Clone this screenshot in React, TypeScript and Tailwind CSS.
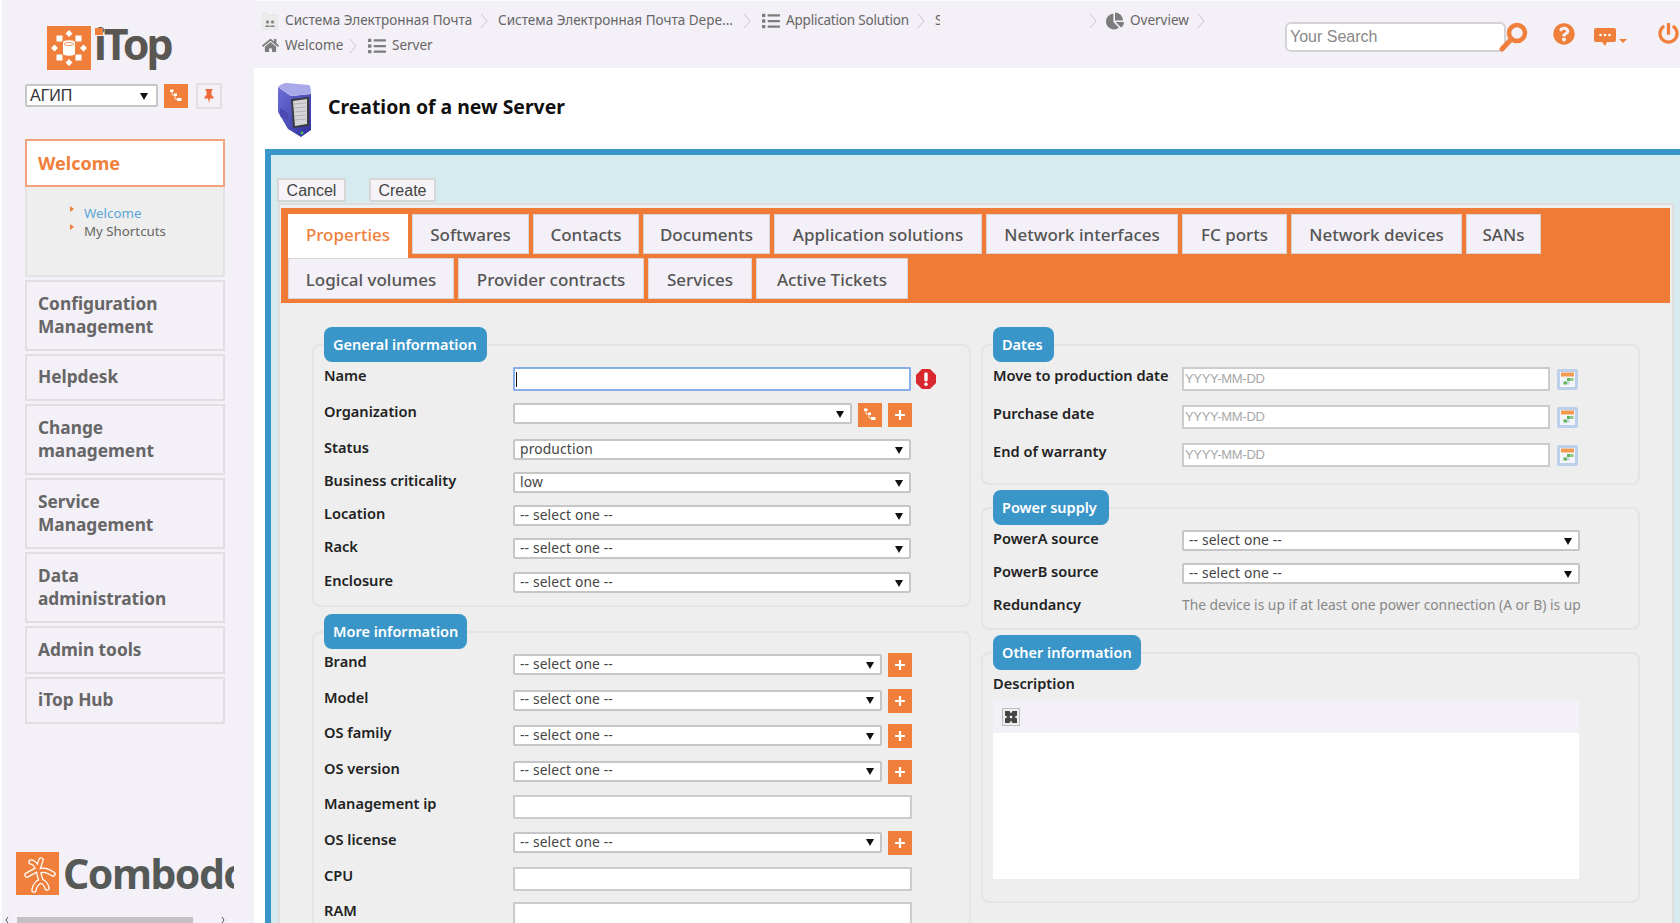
import { FaChartPie, FaHome, FaList, FaPowerOff, FaQuestionCircle } from "react-icons/fa";

const ui = "font-['Noto_Sans','Liberation_Sans',sans-serif]";

const tabsTop = [
  { label: "Properties", w: "w-[120px]", active: true },
  { label: "Softwares", w: "w-[117px]" },
  { label: "Contacts", w: "w-[106px]" },
  { label: "Documents", w: "w-[127px]" },
  { label: "Application solutions", w: "w-[208px]" },
  { label: "Network interfaces", w: "w-[192px]" },
  { label: "FC ports", w: "w-[105px]" },
  { label: "Network devices", w: "w-[171px]" },
  { label: "SANs", w: "w-[75px]" },
];
const tabsBottom = [
  { label: "Logical volumes", w: "w-[166px]" },
  { label: "Provider contracts", w: "w-[186px]" },
  { label: "Services", w: "w-[104px]" },
  { label: "Active Tickets", w: "w-[152px]" },
];

const menu = [
  { lines: ["Configuration", "Management"], h: "h-[71px]" },
  { lines: ["Helpdesk"], h: "h-[47px]" },
  { lines: ["Change", "management"], h: "h-[71px]" },
  { lines: ["Service", "Management"], h: "h-[71px]" },
  { lines: ["Data", "administration"], h: "h-[71px]" },
  { lines: ["Admin tools"], h: "h-[48px]" },
  { lines: ["iTop Hub"], h: "h-[47px]" },
];

function Caret() {
  return (
    <svg viewBox="0 0 8 8" className="w-[8px] h-[8px] shrink-0 fill-[#111]">
      <path d="M0 1h8L4 8z" />
    </svg>
  );
}

function Chevron({ className = "" }: { className?: string }) {
  return (
    <svg viewBox="0 0 8 16" className={`w-[8px] h-[16px] shrink-0 fill-none stroke-[#c9c6cc] ${className}`}>
      <path d="M1 1l6 7-6 7" strokeWidth="1" />
    </svg>
  );
}

function TreeButton({ className = "" }: { className?: string }) {
  return (
    <div className={`bg-[#ef7f3a] flex items-center justify-center shrink-0 ${className}`}>
      <svg viewBox="0 0 14 14" className="w-[14px] h-[14px]">
        <path d="M3 3v3h3M6 6v4h2" fill="none" stroke="#fbe2d2" strokeWidth="1" />
        <rect x="1" y="0.5" width="3.5" height="2.5" fill="#fff" />
        <rect x="5" y="4.5" width="3" height="2.5" fill="#fff" />
        <rect x="8" y="9" width="4.5" height="3" fill="#fff" />
      </svg>
    </div>
  );
}

function PlusButton() {
  return (
    <div className="w-[24px] h-[24px] bg-[#ef7f3a] flex items-center justify-center shrink-0">
      <svg viewBox="0 0 10 10" className="w-[10px] h-[10px] stroke-white">
        <path d="M5 0v10M0 5h10" strokeWidth="2.2" />
      </svg>
    </div>
  );
}

function Select({ value = "", w = "w-[398px]", h = "h-[21px]" }: { value?: string; w?: string; h?: string }) {
  return (
    <div className={`${w} ${h} shrink-0 bg-white border-2 border-[#c6c6c6] rounded-[2px] flex items-center justify-between pl-[5px] pr-[6px] text-[13.8px] leading-none text-[#444]`}>
      <span className="whitespace-nowrap -mt-[2px] tracking-[0.15px]">{value}</span>
      <Caret />
    </div>
  );
}

function TextBox({ w = "w-[399px]" }: { w?: string }) {
  return <input className={`${w} h-[24px] shrink-0 bg-white border-2 border-[#cccccc] rounded-[1px] outline-none`} />;
}

function DateBox() {
  return (
    <div className="w-[368px] h-[24px] shrink-0 bg-white border-2 border-[#cccccc] flex items-center pl-[1px] font-['Liberation_Sans',sans-serif] text-[13px] tracking-[-0.3px] text-[#a8a8a8]">
      YYYY-MM-DD
    </div>
  );
}

function CalendarIcon() {
  return (
    <svg viewBox="0 0 21 21" className="w-[21px] h-[21px] ml-[7px] mt-[2px] shrink-0">
      <rect x="0" y="0" width="21" height="21" rx="2" fill="#bcd0ec" />
      <rect x="3" y="3" width="15" height="15" fill="#f3f5f8" />
      <rect x="4" y="3.5" width="13" height="4" fill="#f29a4e" />
      <rect x="10" y="9" width="3.5" height="3" fill="#5fb35a" />
      <rect x="13.5" y="9" width="3" height="3" fill="#8ccb84" />
      <rect x="6.5" y="12.5" width="3.5" height="3" fill="#5fb35a" />
      <rect x="10" y="12.5" width="2.5" height="3" fill="#c9d6e6" />
    </svg>
  );
}

function ErrorIcon() {
  return (
    <svg viewBox="0 0 20 20" className="w-[20px] h-[20px] ml-[5px] mt-[2px] shrink-0">
      <path d="M6 0h8l6 6v8l-6 6H6l-6-6V6z" fill="#d9272e" />
      <rect x="8.3" y="3.5" width="3.4" height="9" rx="1.4" fill="#fff" />
      <circle cx="10" cy="15.3" r="1.8" fill="#fff" />
    </svg>
  );
}

function Label({ children }: { children: string }) {
  return <div className="w-[189px] shrink-0 -mt-px text-[14.6px] leading-[18px] font-semibold text-[#222] whitespace-nowrap">{children}</div>;
}

function Row({ label, h, children }: { label: string; h: string; children?: React.ReactNode }) {
  return (
    <div className={`flex items-start ${h}`}>
      <Label>{label}</Label>
      {children}
    </div>
  );
}

function Fieldset({ title, legendW, className = "", children }: { title: string; legendW: string; className?: string; children: React.ReactNode }) {
  return (
    <section className={`border-2 border-[#e4e4e4] rounded-[8px] pl-[10px] ${className}`}>
      <div className={`${legendW} h-[35px] -mt-[19px] bg-[#3a96c9] rounded-[8px] text-white text-[14.5px] font-semibold flex items-center pl-[9px] whitespace-nowrap`}>
        {title}
      </div>
      {children}
    </section>
  );
}

function SelectPlus({ h }: { h: string }) {
  return (
    <div className={`flex items-start gap-[6px] ${h}`}>
      <div className="pt-px">
        <Select value="-- select one --" w="w-[369px]" />
      </div>
      <PlusButton />
    </div>
  );
}

function ItopMark() {
  return (
    <svg viewBox="0 0 44 44" className="w-[44px] h-[44px] shrink-0">
      <rect width="44" height="44" fill="#ef7f3a" />
      <g fill="#fff">
        <path d="M22 4l3.5 3.5L22 11l-3.5-3.5zM22 33l3.5 3.5L22 40l-3.5-3.5zM7.5 18.5L11 22l-3.5 3.5L4 22zM36.5 18.5L40 22l-3.5 3.5L33 22z" />
        <rect x="9.5" y="9.5" width="6" height="6" />
        <rect x="28.5" y="9.5" width="6" height="6" />
        <rect x="9.5" y="28.5" width="6" height="6" />
        <rect x="28.5" y="28.5" width="6" height="6" />
        <path d="M16 16.5c0-3 12-3 12 0v11c0 3-12 3-12 0z" />
      </g>
      <ellipse cx="22" cy="18" rx="5" ry="1.5" fill="none" stroke="#ef7f3a" strokeWidth="0.8" />
    </svg>
  );
}

function ComboMark() {
  const limbs = "M15 10c3 0 5 3 7 7M22 17l-11 6M22 17l3-9M24 19c4-2 8 0 13 3M22 17c1 5 2 9 3 12M25 29c-3 1-6 4-7 9M25 29c3 1 5 3 6 7";
  return (
    <svg viewBox="0 0 43 43" className="w-[43px] h-[43px] shrink-0 fill-none" strokeLinecap="round">
      <rect width="43" height="43" fill="#ef7f3a" />
      <path d={limbs} stroke="#fff" strokeWidth="5.5" />
      <path d={limbs} stroke="#ef7f3a" strokeWidth="3" />
    </svg>
  );
}

function ServerIcon() {
  return (
    <svg viewBox="0 0 36 55" className="w-[36px] h-[55px] shrink-0">
      <defs>
        <linearGradient id="tower" x1="0" x2="1" y1="0" y2="1">
          <stop offset="0" stopColor="#6f70d6" />
          <stop offset="1" stopColor="#2f2f9c" />
        </linearGradient>
      </defs>
      <path d="M1 5l13 9 20-2v36l-10 7-13-8L1 30z" fill="url(#tower)" />
      <path d="M1 5Q5 1 10 1l22 2q2 1 2 9l-20 2z" fill="#a9a9ea" />
      <path d="M3 26l8 5v8l-8-5z" fill="#4a4ab0" />
      <path d="M14 17l18-2v29l-16 2z" fill="#3b3b40" />
      <path d="M16 19l14-2v25l-12 2z" fill="#d5d5d8" />
      <path d="M17 22l12-1M17 26l12-1M17 30l12-1M17 34l12-1M17 38l12-1" stroke="#a8a8ae" strokeWidth="0.7" />
      <circle cx="25" cy="51" r="1.4" fill="#53c653" />
    </svg>
  );
}

function OrgIcon() {
  return (
    <svg viewBox="0 0 16 18" className="w-[16px] h-[18px] shrink-0">
      <path d="M0 1h6l1 2h9v15H0z" fill="#ececec" stroke="#dedede" strokeWidth="0.5" />
      <circle cx="5.5" cy="10" r="1.7" fill="#8a8a8a" />
      <circle cx="10.5" cy="10" r="1.7" fill="#8a8a8a" />
      <path d="M3 15c0-2.5 5-2.5 5 0zM8 15c0-2.5 5-2.5 5 0z" fill="#8a8a8a" />
    </svg>
  );
}

function Crumb({ w, children, className = "" }: { w: string; children: string; className?: string }) {
  return <span className={`${w} whitespace-nowrap shrink-0 ${className}`}>{children}</span>;
}

export default function App() {
  return (
    <div className={`flex w-[1680px] h-[923px] overflow-hidden bg-white ${ui}`}>
      {/* Left menu */}
      <aside className="w-[254px] h-full shrink-0 flex flex-col bg-[#f4f0f7] border-l-2 border-l-[#fbfafc]">
        <div className="flex items-start pl-[45px] pt-[26px] h-[84px]">
          <ItopMark />
          <div className="relative ml-[3px] -mt-[11px] text-[43px] leading-[58px] font-bold tracking-[-3px] text-[#5a5651]">
            iTop
            <span className="absolute left-[1px] top-[13px] w-[8px] h-[7px] bg-[#ef7f3a]" />
          </div>
        </div>
        <div className="flex items-start pl-[23px] h-[25px]">
          <div className="w-[133px] h-[23px] bg-white border-2 border-[#c6c6c6] rounded-[2px] flex items-center justify-between pl-[3px] pr-[8px] font-['Liberation_Sans',sans-serif] text-[16px] text-[#333]">
            <span>АГИП</span>
            <Caret />
          </div>
          <TreeButton className="w-[24px] h-[24px] ml-[6px]" />
          <div className="w-[26px] h-[26px] ml-[8px] -mt-px border-2 border-[#e2dee4] flex items-center justify-center">
            <svg viewBox="0 0 10 14" className="w-[10px] h-[14px] fill-[#ef6a3a]">
              <path d="M1.5 0h7v1.5L7.5 2v4l2 2v1.5H6L5 14l-1-4.500H.5V8l2-2V2l-1-.5z" />
            </svg>
          </div>
        </div>
        <nav className="ml-[23px] mt-[30px] w-[200px] flex flex-col">
          <div className="h-[48px] bg-white border-2 border-[#f2a37a] flex items-center pl-[11px] text-[18px] font-bold text-[#ef7f3a]">Welcome</div>
          <div className="h-[90px] bg-[#eeeeee] border-2 border-t-0 border-[#e3e3e3] pl-[43px] pt-[17px] text-[13.300px] leading-[18px] text-[#666]">
            <div className="relative pl-[14px] text-[#5aa5d6]">
              <span className="absolute left-0 top-[2px] w-0 h-0 border-y-[3px] border-y-transparent border-l-[4px] border-l-[#ef7f3a]" />
              Welcome
            </div>
            <div className="relative pl-[14px]">
              <span className="absolute left-0 top-[2px] w-0 h-0 border-y-[3px] border-y-transparent border-l-[4px] border-l-[#ef7f3a]" />
              My Shortcuts
            </div>
          </div>
          <div className="flex flex-col gap-[3px] mt-[3px]">
            {menu.map((m) => (
              <div key={m.lines[0]} className={`${m.h} border-2 border-[#e1dee3] flex flex-col justify-center pl-[11px] pb-[2px] text-[17.300px] leading-[23px] font-bold text-[#666]`}>
                {m.lines.map((l) => (
                  <div key={l}>{l}</div>
                ))}
              </div>
            ))}
          </div>
        </nav>
        <div className="mt-auto ml-[14px] w-[218px] h-[43px] mb-[22px] flex items-center overflow-hidden">
          <ComboMark />
          <span className="ml-[4px] text-[41px] leading-none font-bold tracking-[-1.5px] text-[#555a58] whitespace-nowrap">Combodo</span>
        </div>
        <div className="h-[6px] flex items-center">
          <svg viewBox="0 0 4 6" className="w-[4px] h-[6px] ml-[3px] fill-none stroke-[#555]"><path d="M3 0L1 3l2 3" /></svg>
          <div className="ml-[8px] w-[176px] h-full bg-[#c4c0c4]" />
          <svg viewBox="0 0 4 6" className="w-[4px] h-[6px] ml-[28px] fill-none stroke-[#555]"><path d="M1 0l2 3-2 3" /></svg>
        </div>
      </aside>

      <main className="flex-1 min-w-0 flex flex-col">
        {/* Top bar */}
        <header className="h-[68px] shrink-0 flex bg-[#f4f0f7] border-t border-t-[#fbfafc] pl-[8px]">
          <div className="w-[1023px] shrink-0 pt-[6px] text-[13.500px] text-[#666] leading-[27px]">
            <div className="flex items-center h-[27px]">
              <OrgIcon />
              <Crumb w="w-[187px]" className="ml-[7px]">Система Электронная Почта</Crumb>
              <Chevron className="ml-[8px]" />
              <Crumb w="w-[235px]" className="ml-[10px]">Система Электронная Почта Depe...</Crumb>
              <Chevron className="ml-[10px]" />
              <FaList className="w-[18px] h-[18px] ml-[11px] shrink-0 text-[#7d7d7d]" />
              <Crumb w="w-[123px]" className="ml-[6px] tracking-[-0.2px]">Application Solution</Crumb>
              <Chevron className="ml-[8px]" />
              <Crumb w="w-[5px]" className="ml-[10px] overflow-hidden">S</Crumb>
              <Chevron className="ml-[149px] w-[6px] h-[12px]" />
              <FaChartPie className="w-[18px] h-[18px] ml-[9px] shrink-0 text-[#7d7d7d]" />
              <Crumb w="w-[60px]" className="ml-[6px]">Overview</Crumb>
              <Chevron className="ml-[7px]" />
            </div>
            <div className="flex items-center h-[27px] -mt-[2px]">
              <FaHome className="w-[17px] h-[17px] shrink-0 text-[#7d7d7d]" />
              <Crumb w="w-[58px]" className="ml-[6px]">Welcome</Crumb>
              <Chevron className="ml-[6px]" />
              <FaList className="w-[18px] h-[18px] ml-[11px] shrink-0 text-[#7d7d7d]" />
              <Crumb w="w-[45px]" className="ml-[6px]">Server</Crumb>
            </div>
          </div>
          <div className="flex items-start pt-[21px]">
            <div className="w-[221px] h-[30px] bg-white border-2 border-[#d4d2d6] rounded-[6px] flex items-center pl-[3px] font-['Liberation_Sans',sans-serif] text-[16px] text-[#888]">
              Your Search
            </div>
            <svg viewBox="0 0 29 30" className="w-[29px] h-[30px] -ml-[7px] shrink-0">
              <circle cx="18" cy="11" r="8" fill="#f4f0f7" stroke="#ef7f3a" strokeWidth="4.500" />
              <path d="M11.500 18L3 27" stroke="#ef7f3a" strokeWidth="5" strokeLinecap="round" />
            </svg>
            <FaQuestionCircle className="w-[22px] h-[22px] ml-[25px] mt-[1px] text-[#ef7f3a] shrink-0" />
            <svg viewBox="0 0 22 18" className="w-[22px] h-[18px] ml-[19px] mt-[6px] shrink-0">
              <path d="M2 0h18a2 2 0 012 2v10a2 2 0 01-2 2h-7l-2 4-3-4H2a2 2 0 01-2-2V2a2 2 0 012-2z" fill="#ef7f3a" />
              <circle cx="6.500" cy="7" r="1.300" fill="#fff" />
              <circle cx="11" cy="7" r="1.300" fill="#fff" />
              <circle cx="15.500" cy="7" r="1.300" fill="#fff" />
            </svg>
            <svg viewBox="0 0 8 4" className="w-[8px] h-[4px] ml-[3px] mt-[17px] shrink-0 fill-[#ef7f3a]"><path d="M0 0h8L4 4z" /></svg>
            <FaPowerOff className="w-[21px] h-[21px] ml-[31px] mt-[1px] text-[#ef7f3a] shrink-0" />
          </div>
        </header>

        {/* Page title */}
        <div className="h-[81px] shrink-0 flex items-start pl-[23px] pt-[14px]">
          <ServerIcon />
          <h1 className="ml-[15px] mt-[11px] text-[19.400px] leading-[28px] font-bold text-[#111]">Creation of a new Server</h1>
        </div>

        {/* Form panel */}
        <div className="flex-1 min-h-0 ml-[11px] bg-[#d6ebef] border-l-[6px] border-t-[6px] border-[#3a96c9] pl-[7px] pr-[6px] pt-[23px] flex flex-col">
          <div className="flex gap-[23px] h-[25px] shrink-0 -ml-px">
            <button className="w-[69px] h-[24px] pt-px bg-[#f6f4f8] border-2 border-[#d6d6d6] rounded-[2px] font-['Liberation_Sans',sans-serif] text-[16px] leading-none text-[#444]">Cancel</button>
            <button className="w-[67px] h-[24px] pt-px bg-[#f6f4f8] border-2 border-[#d6d6d6] rounded-[2px] font-['Liberation_Sans',sans-serif] text-[16px] leading-none text-[#444]">Create</button>
          </div>
          <div className="flex-1 min-h-0 bg-[#eeeeee] border-2 border-b-0 border-[#dedede] pl-[1px] pr-[2px] pt-[3px] overflow-hidden">
            <div className="h-[95px] bg-[#ef7b37] pl-[7px] pt-[6px]">
              <div className="flex gap-[4px] h-[44px]">
                {tabsTop.map((t) => (
                  <div
                    key={t.label}
                    className={
                      t.active
                        ? `${t.w} h-[44px] bg-white flex items-center justify-center pb-[2px] text-[17px] font-medium text-[#ef7f3a]`
                        : `${t.w} h-[40px] bg-[#f4f0f7] border border-[#d8d4d8] flex items-center justify-center pt-[2px] text-[17px] font-medium text-[#555]`
                    }
                  >
                    {t.label}
                  </div>
                ))}
              </div>
              <div className="flex gap-[4px]">
                {tabsBottom.map((t) => (
                  <div key={t.label} className={`${t.w} h-[41px] bg-[#f4f0f7] border border-[#d8d4d8] flex items-center justify-center pt-[2px] text-[17px] font-medium text-[#555]`}>
                    {t.label}
                  </div>
                ))}
              </div>
            </div>

            <div className="grid grid-cols-[659px_659px] gap-x-[10px] pl-[31px] pt-[41px]">
              <div className="flex flex-col gap-[24px]">
                <Fieldset title="General information" legendW="w-[163px]" className="h-[263px]">
                  <div className="mt-[5px]">
                    <Row label="Name" h="h-[36px]">
                      <div className="w-[398px] h-[24px] bg-white border-2 border-[#86aeea] rounded-[1px] flex items-center pl-[1px]">
                        <span className="w-px h-[15px] bg-[#111]" />
                      </div>
                      <ErrorIcon />
                    </Row>
                    <Row label="Organization" h="h-[36px]">
                      <Select w="w-[339px]" />
                      <TreeButton className="w-[24px] h-[24px] ml-[6px]" />
                      <div className="ml-[6px]"><PlusButton /></div>
                    </Row>
                    <Row label="Status" h="h-[33px]"><Select value="production" /></Row>
                    <Row label="Business criticality" h="h-[33px]"><Select value="low" /></Row>
                    <Row label="Location" h="h-[33px]"><Select value="-- select one --" /></Row>
                    <Row label="Rack" h="h-[34px]"><Select value="-- select one --" /></Row>
                    <Row label="Enclosure" h="h-[21px]"><Select value="-- select one --" /></Row>
                  </div>
                </Fieldset>
                <Fieldset title="More information" legendW="w-[143px]" className="h-[400px]">
                  <div className="mt-[4px]">
                    {["Brand", "Model", "OS family", "OS version"].map((l) => (
                      <Row key={l} label={l} h="h-[35.600px]"><SelectPlus h="h-[35.600px]" /></Row>
                    ))}
                    <Row label="Management ip" h="h-[35.600px]"><TextBox /></Row>
                    <Row label="OS license" h="h-[35.600px]"><SelectPlus h="h-[35.600px]" /></Row>
                    <Row label="CPU" h="h-[35.600px]"><TextBox /></Row>
                    <Row label="RAM" h="h-[35.600px]"><TextBox /></Row>
                  </div>
                </Fieldset>
              </div>

              <div className="flex flex-col gap-[22px]">
                <Fieldset title="Dates" legendW="w-[61px]" className="h-[141px]">
                  <div className="mt-[5px]">
                    {["Move to production date", "Purchase date", "End of warranty"].map((l) => (
                      <Row key={l} label={l} h="h-[38px]">
                        <DateBox />
                        <CalendarIcon />
                      </Row>
                    ))}
                  </div>
                </Fieldset>
                <Fieldset title="Power supply" legendW="w-[116px]" className="h-[123px]">
                  <div className="mt-[5px]">
                    <Row label="PowerA source" h="h-[33px]"><Select value="-- select one --" /></Row>
                    <Row label="PowerB source" h="h-[33px]"><Select value="-- select one --" /></Row>
                    <Row label="Redundancy" h="h-[18px]">
                      <span className="text-[13.800px] leading-[18px] text-[#888] whitespace-nowrap">The device is up if at least one power connection (A or B) is up</span>
                    </Row>
                  </div>
                </Fieldset>
                <Fieldset title="Other information" legendW="w-[148px]" className="h-[251px]">
                  <div className="text-[14.600px] leading-[18px] font-semibold text-[#222] mt-[4px]">Description</div>
                  <div className="mt-[9px] w-[586px] h-[178px] bg-white">
                    <div className="h-[32px] bg-[#f4f0f7] pl-[9px] pt-[7px]">
                      <div className="w-[18px] h-[18px] border border-[#bdbdbd] bg-[#eeeeee] flex items-center justify-center">
                        <svg viewBox="0 0 12 12" className="w-[12px] h-[12px] fill-[#444]">
                          <path d="M0 0h4.500L6 2.500 7.500 0H12v4.500L9.500 6 12 7.500V12H7.500L6 9.500 4.500 12H0V7.500L2.500 6 0 4.500z" />
                          <rect x="4.800" y="4.800" width="2.400" height="2.400" fill="#eeeeee" />
                        </svg>
                      </div>
                    </div>
                  </div>
                </Fieldset>
              </div>
            </div>
          </div>
        </div>
      </main>
    </div>
  );
}
